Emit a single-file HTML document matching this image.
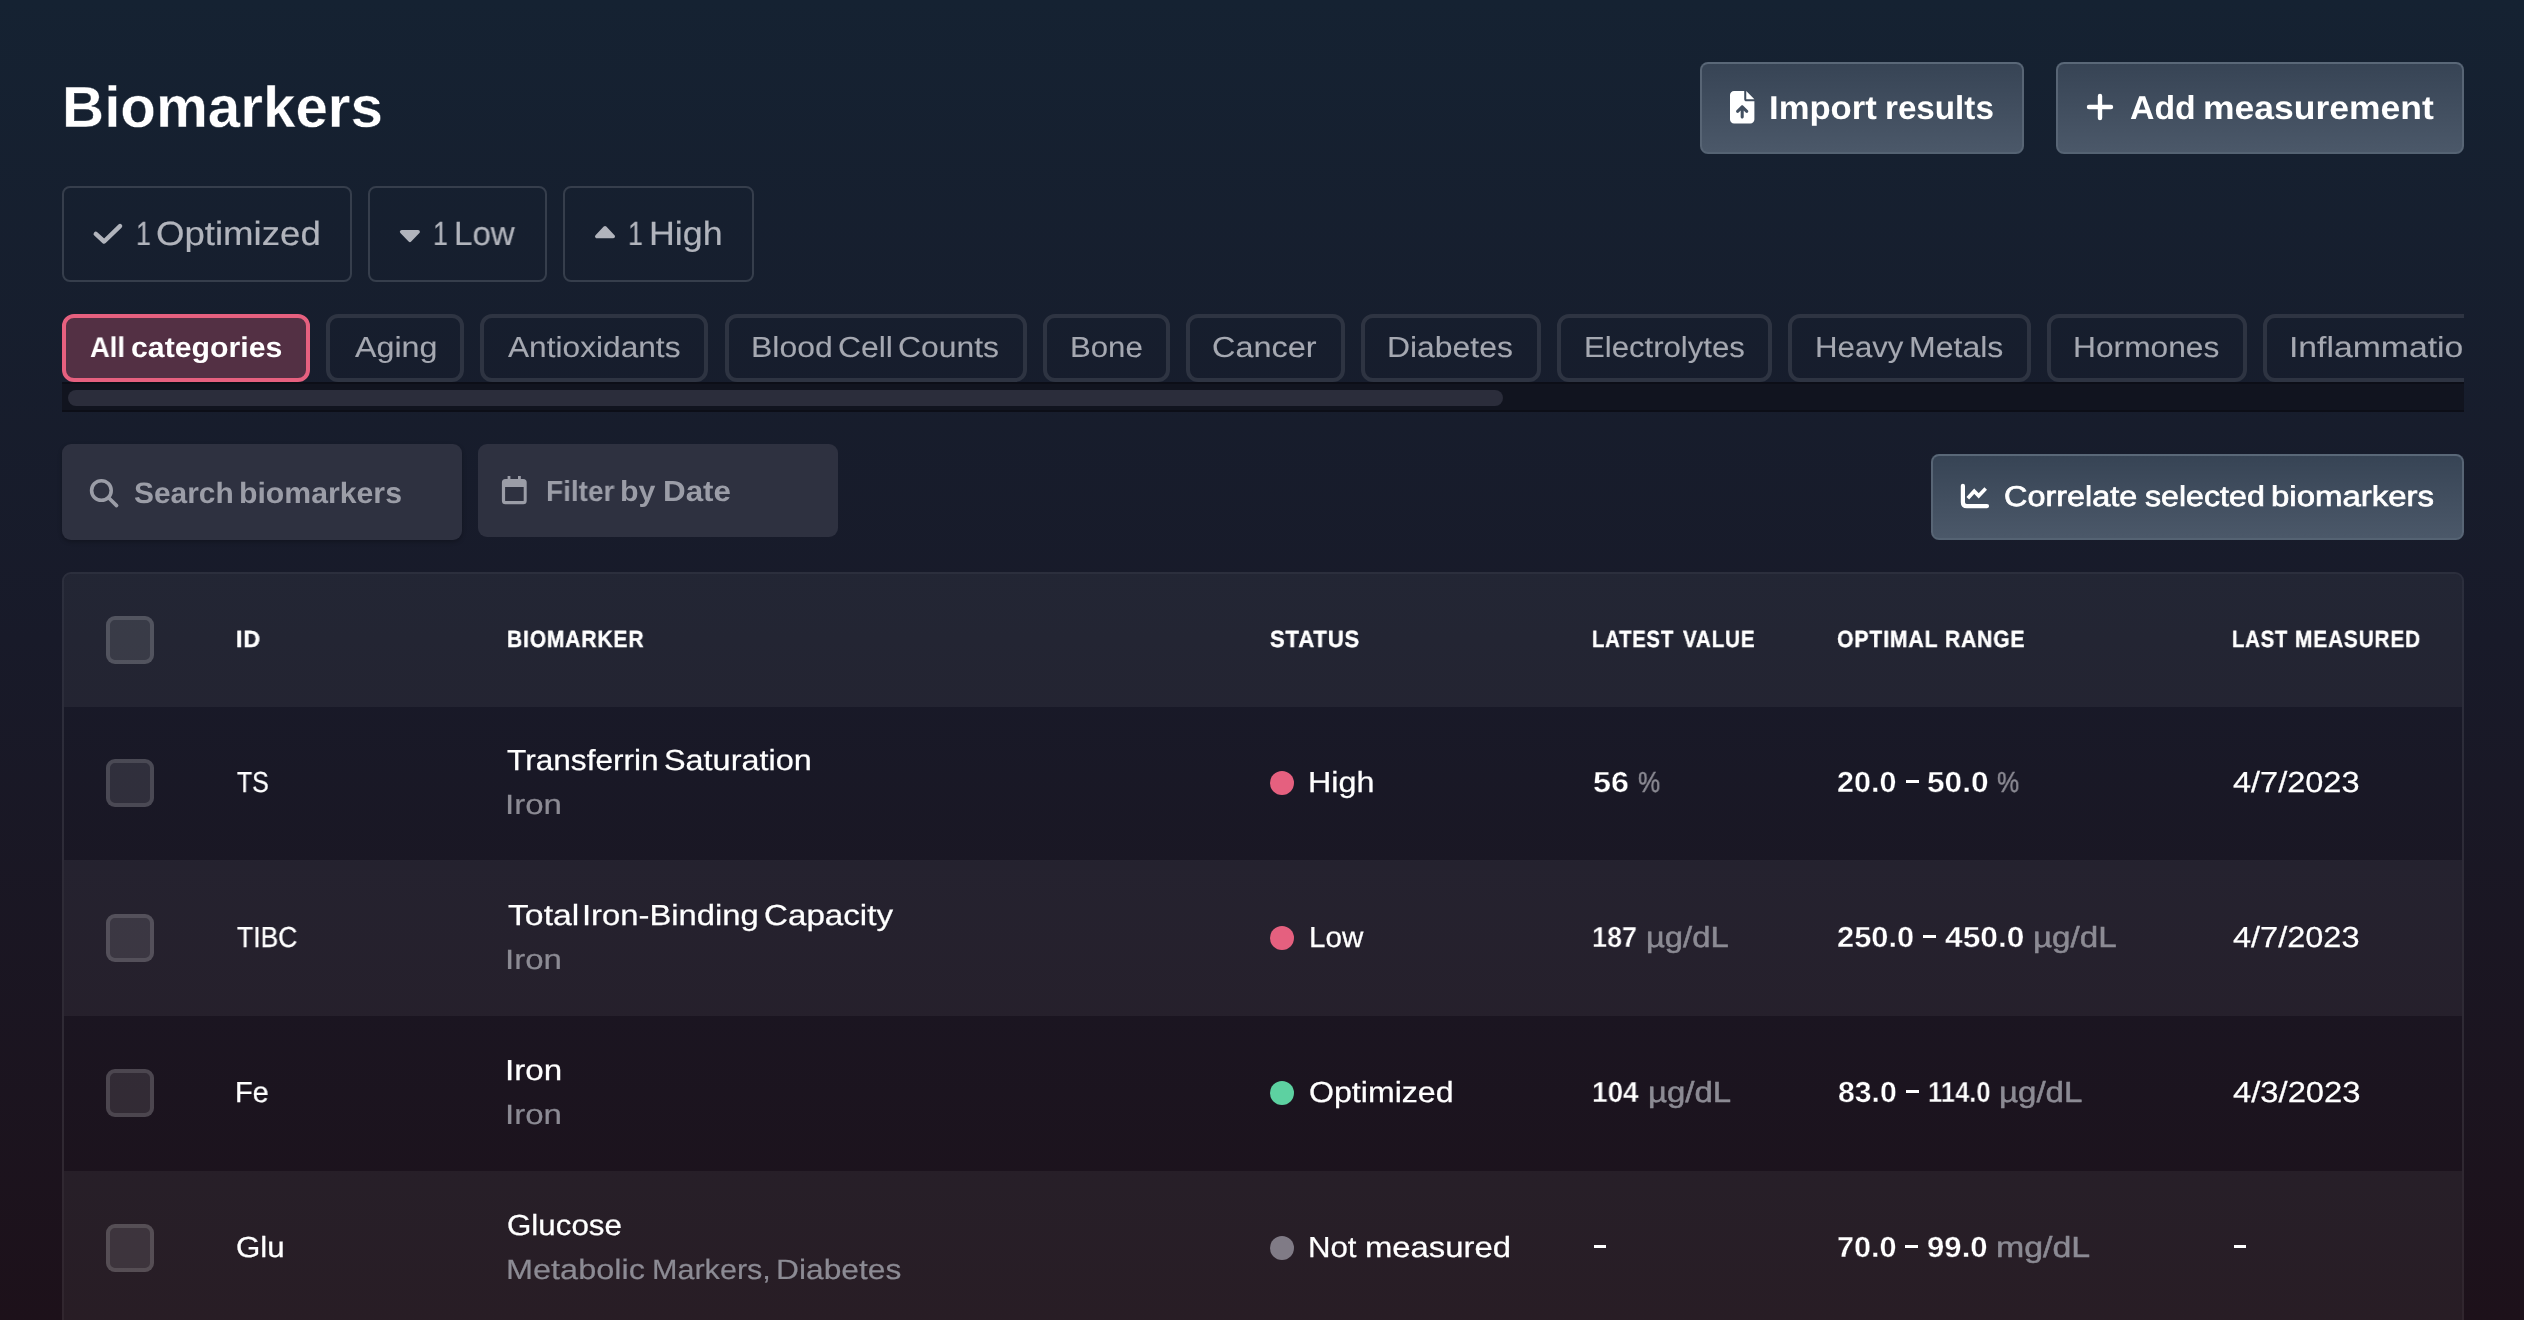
<!DOCTYPE html><html lang="en"><head><meta charset="utf-8"><title>Biomarkers</title><style>
*{box-sizing:border-box;margin:0;padding:0}
html,body{width:2524px;height:1320px;overflow:hidden;background:#181928}
body{font-family:"Liberation Sans",sans-serif;position:relative;
 background:linear-gradient(180deg,#152232 0px,#181a29 640px,#1d111a 1320px);}
.t{position:absolute;white-space:nowrap;line-height:1;transform-origin:0 0;display:block;will-change:transform;-webkit-font-smoothing:antialiased;text-rendering:geometricPrecision}
.abs{position:absolute}
main{position:absolute;left:0;top:0;width:2524px;height:1320px;overflow:hidden;display:block}
.btn{position:absolute;border-radius:8px;border:2px solid #586575;border-top-color:#5a6878;border-bottom-color:#556373;
 background:linear-gradient(180deg,#374455 0%,#4b5869 100%);}
.chip{position:absolute;top:186px;height:96px;border:2px solid #363e4c;border-radius:8px}
.tab{position:absolute;top:314px;height:68px;border:4px solid #2e3442;border-radius:12px}
.tab.on{border-color:#e6607f;background:#533044}
.track{position:absolute;left:62px;top:382px;width:2402px;height:30px;background:#11141f;
 border-top:2px solid #0c0e17;border-bottom:2px solid #0c0e17}
.thumb{position:absolute;left:68px;top:390px;width:1435px;height:16px;border-radius:8px;background:#2b2d3b}
.inp{position:absolute;border-radius:9px;background:#2e3140}
.table{position:absolute;left:62px;top:572px;width:2402px;height:760px;border:2px solid rgba(255,255,255,.09);
 border-radius:9px;overflow:hidden}
.row{position:absolute;left:0;width:100%}
.cb{position:absolute;left:42px;width:48px;height:48px;border-radius:9px;border:4px solid rgba(255,255,255,.13);
 background:rgba(255,255,255,.10)}
.dot{position:absolute;width:24px;height:24px;border-radius:50%}
svg{position:absolute;overflow:visible}
</style></head><body><main>
<h1><span class="t " style="left:61.68px;top:79px;font-size:58px;color:#fff;transform:scaleX(1.0058);font-weight:bold;-webkit-text-stroke:0.4px #162130;">Biomarkers</span></h1>
<div class="btn" style="left:1700px;top:62px;width:324px;height:92px"></div>
<svg style="left:1730px;top:90.6px" width="24.4" height="32.6" viewBox="0 0 384 512"><path fill="#fff" fill-rule="evenodd" d="M64 0C28.7 0 0 28.7 0 64V448c0 35.3 28.7 64 64 64H320c35.300 0 64-28.700 64-64V160H256c-17.700 0-32-14.300-32-32V0H64zM256 0V128H384L256 0zM216 408c0 13.300-10.700 24-24 24s-24-10.700-24-24V305.900l-31 31c-9.400 9.400-24.600 9.400-33.900 0s-9.400-24.600 0-33.900l72-72c9.400-9.400 24.600-9.400 33.900 0l72 72c9.400 9.400 9.400 24.600 0 33.900s-24.600 9.400-33.900 0l-31-31V408z"/></svg>
<span class="t " style="left:1769.09px;top:91px;font-size:33px;color:#fff;transform:scaleX(1.0500);font-weight:bold;">Import</span><span class="t " style="left:1885.49px;top:91px;font-size:33px;color:#fff;transform:scaleX(1.0057);font-weight:bold;">results</span>
<div class="btn" style="left:2056px;top:62px;width:408px;height:92px"></div>
<svg style="left:2085px;top:92px" width="30" height="30" viewBox="0 0 30 30"><path d="M15 4.000V26M4 15H26" stroke="#fff" stroke-width="4.4" stroke-linecap="round" fill="none"/></svg>
<span class="t " style="left:2129.78px;top:91px;font-size:33px;color:#fff;transform:scaleX(1.0229);font-weight:bold;">Add</span><span class="t " style="left:2202.84px;top:91px;font-size:33px;color:#fff;transform:scaleX(1.0754);font-weight:bold;">measurement</span>
<div class="chip" style="left:62px;width:290px"></div>
<svg style="left:90px;top:220px" width="36" height="28" viewBox="90 220 36 28"><path d="M95.800 233.900L104.100 241.500L120 226.100" stroke="#b1b4bc" stroke-width="4.500" stroke-linecap="round" stroke-linejoin="round" fill="none"/></svg>
<span class="t " style="left:135.50px;top:218px;font-size:33.5px;color:#b1b4bc;transform:scaleX(0.8000);-webkit-text-stroke:0.2px #b1b4bc;">1</span><span class="t " style="left:156.26px;top:218px;font-size:33.5px;color:#b1b4bc;transform:scaleX(1.0924);-webkit-text-stroke:0.2px #b1b4bc;">Optimized</span>
<div class="chip" style="left:368px;width:179px"></div>
<svg style="left:398px;top:228px" width="24" height="16" viewBox="398 228 24 16"><path d="M401.700 231.800H418.100L409.900 240.300Z" fill="#b1b4bc" stroke="#b1b4bc" stroke-width="3.6" stroke-linejoin="round"/></svg>
<span class="t " style="left:433.25px;top:218px;font-size:33.5px;color:#b1b4bc;transform:scaleX(0.8000);-webkit-text-stroke:0.2px #b1b4bc;">1</span><span class="t " style="left:454.14px;top:218px;font-size:33.5px;color:#b1b4bc;transform:scaleX(0.9864);-webkit-text-stroke:0.2px #b1b4bc;">Low</span>
<div class="chip" style="left:563px;width:191px"></div>
<svg style="left:593px;top:224px" width="24" height="16" viewBox="593 224 24 16"><path d="M596.800 236.400H613.200L605 227.800Z" fill="#b1b4bc" stroke="#b1b4bc" stroke-width="3.6" stroke-linejoin="round"/></svg>
<span class="t " style="left:628.25px;top:218px;font-size:33.5px;color:#b1b4bc;transform:scaleX(0.8000);-webkit-text-stroke:0.2px #b1b4bc;">1</span><span class="t " style="left:649.11px;top:218px;font-size:33.5px;color:#b1b4bc;transform:scaleX(1.0686);-webkit-text-stroke:0.2px #b1b4bc;">High</span>
<div class="abs" style="left:62px;top:300px;width:2402px;height:90px;overflow:hidden">
<div class="tab on" style="left:0px;top:14px;width:248px"></div>
<div class="tab" style="left:264px;top:14px;width:138px"></div>
<div class="tab" style="left:418px;top:14px;width:228px"></div>
<div class="tab" style="left:663px;top:14px;width:302px"></div>
<div class="tab" style="left:981px;top:14px;width:127px"></div>
<div class="tab" style="left:1124px;top:14px;width:159px"></div>
<div class="tab" style="left:1299px;top:14px;width:180px"></div>
<div class="tab" style="left:1495px;top:14px;width:215px"></div>
<div class="tab" style="left:1726px;top:14px;width:243px"></div>
<div class="tab" style="left:1985px;top:14px;width:200px"></div>
<div class="tab" style="left:2201px;top:14px;width:268px"></div>
</div>
<span class="t " style="left:90.13px;top:334px;font-size:28.5px;color:#fff;transform:scaleX(0.9614);font-weight:bold;">All</span><span class="t " style="left:131.23px;top:334px;font-size:28.5px;color:#fff;transform:scaleX(1.0613);font-weight:bold;">categories</span>
<span class="t " style="left:354.80px;top:334px;font-size:29px;color:#a5a8b1;transform:scaleX(1.1120);-webkit-text-stroke:0.1px #a5a8b1;">Aging</span>
<span class="t " style="left:508.40px;top:334px;font-size:29px;color:#a5a8b1;transform:scaleX(1.0917);-webkit-text-stroke:0.1px #a5a8b1;">Antioxidants</span>
<span class="t " style="left:750.67px;top:334px;font-size:29px;color:#a5a8b1;transform:scaleX(1.1014);-webkit-text-stroke:0.1px #a5a8b1;">Blood</span><span class="t " style="left:837.96px;top:334px;font-size:29px;color:#a5a8b1;transform:scaleX(1.0985);-webkit-text-stroke:0.1px #a5a8b1;">Cell</span><span class="t " style="left:898.16px;top:334px;font-size:29px;color:#a5a8b1;transform:scaleX(1.0994);-webkit-text-stroke:0.1px #a5a8b1;">Counts</span>
<span class="t " style="left:1069.53px;top:334px;font-size:29px;color:#a5a8b1;transform:scaleX(1.0748);-webkit-text-stroke:0.1px #a5a8b1;">Bone</span>
<span class="t " style="left:1212.43px;top:334px;font-size:29px;color:#a5a8b1;transform:scaleX(1.1190);-webkit-text-stroke:0.1px #a5a8b1;">Cancer</span>
<span class="t " style="left:1387.47px;top:334px;font-size:29px;color:#a5a8b1;transform:scaleX(1.0998);-webkit-text-stroke:0.1px #a5a8b1;">Diabetes</span>
<span class="t " style="left:1583.53px;top:334px;font-size:29px;color:#a5a8b1;transform:scaleX(1.0730);-webkit-text-stroke:0.1px #a5a8b1;">Electrolytes</span>
<span class="t " style="left:1814.52px;top:334px;font-size:29px;color:#a5a8b1;transform:scaleX(1.0763);-webkit-text-stroke:0.1px #a5a8b1;">Heavy</span><span class="t " style="left:1908.76px;top:334px;font-size:29px;color:#a5a8b1;transform:scaleX(1.1048);-webkit-text-stroke:0.1px #a5a8b1;">Metals</span>
<span class="t " style="left:2072.98px;top:334px;font-size:29px;color:#a5a8b1;transform:scaleX(1.0943);-webkit-text-stroke:0.1px #a5a8b1;">Hormones</span>
<div class="abs" style="left:2263px;top:314px;width:201px;height:68px;overflow:hidden"><span class="t " style="left:25.88px;top:20px;font-size:29px;color:#a5a8b1;transform:scaleX(1.1628);-webkit-text-stroke:0.1px #a5a8b1;">Inflammation</span></div>
<div class="track"></div><div class="thumb"></div>
<div class="inp" style="left:62px;top:444px;width:400px;height:96px;box-shadow:0 2px 4px rgba(0,0,0,.25)"></div>
<svg style="left:88px;top:476px" width="34" height="34" viewBox="88 476 34 34"><circle cx="101.400" cy="490.500" r="9.800" stroke="#9b9da7" stroke-width="3.600" fill="none"/><path d="M108.600 497.700L116.600 505.600" stroke="#9b9da7" stroke-width="3.600" stroke-linecap="round"/></svg>
<span class="t " style="left:134.09px;top:479px;font-size:29.5px;color:#9b9da7;transform:scaleX(1.0136);font-weight:bold;">Search</span><span class="t " style="left:239.35px;top:479px;font-size:29.5px;color:#9b9da7;transform:scaleX(1.0244);font-weight:bold;">biomarkers</span>
<div class="inp" style="left:478px;top:444px;width:360px;height:93px"></div>
<svg style="left:500px;top:474px" width="30" height="32" viewBox="500 474 30 32"><path fill="#9b9da7" fill-rule="evenodd" d="M507.600 475.900h2.800v3.200h7.600v-3.200h2.800v3.200h2.400q3.500 0 3.500 3.500v18.100q0 3.500 -3.500 3.500h-17.800q-3.500 0 -3.500 -3.500v-18.100q0 -3.500 3.500 -3.500h2.200zM505.100 486.900v13.500q0 .6 .6 .6h17.400q.6 0 .6 -.6v-13.500z"/></svg>
<span class="t " style="left:545.97px;top:478px;font-size:29px;color:#9b9da7;transform:scaleX(0.9650);font-weight:bold;">Filter</span><span class="t " style="left:619.71px;top:478px;font-size:29px;color:#9b9da7;transform:scaleX(1.0472);font-weight:bold;">by</span><span class="t " style="left:662.64px;top:478px;font-size:29px;color:#9b9da7;transform:scaleX(1.0817);font-weight:bold;">Date</span>
<div class="btn" style="left:1931px;top:454px;width:533px;height:86px"></div>
<svg style="left:1958px;top:482px" width="34" height="30" viewBox="1958 482 34 30"><path d="M1962.900 485.800V502.200Q1962.900 506.100 1966.800 506.100H1987" stroke="#fff" stroke-width="4.200" stroke-linecap="round" fill="none"/><path d="M1967.800 498.300L1974.200 491.200L1978.700 495.800L1985.700 488.600" stroke="#fff" stroke-width="3.600" fill="none" stroke-linejoin="miter"/></svg>
<span class="t " style="left:2004.41px;top:483px;font-size:28.5px;color:#fff;transform:scaleX(1.1361);-webkit-text-stroke:0.7px #fff;">Correlate</span><span class="t " style="left:2145.01px;top:483px;font-size:28.5px;color:#fff;transform:scaleX(1.1283);-webkit-text-stroke:0.7px #fff;">selected</span><span class="t " style="left:2271.32px;top:483px;font-size:28.5px;color:#fff;transform:scaleX(1.1563);-webkit-text-stroke:0.7px #fff;">biomarkers</span>
<div class="table">
<div class="row" style="top:0;height:133px;background:rgba(255,255,255,.05)">
<div class="cb" style="top:42px"></div>
<span class="t " style="left:172.22px;top:54px;font-size:23.5px;color:#fff;transform:scaleX(0.9845);font-weight:bold;letter-spacing:0.04em;-webkit-text-stroke:0.4px #fff;">ID</span>
<span class="t " style="left:442.56px;top:54px;font-size:23.5px;color:#fff;transform:scaleX(0.8955);font-weight:bold;letter-spacing:0.04em;-webkit-text-stroke:0.4px #fff;">BIOMARKER</span>
<span class="t " style="left:1206.04px;top:54px;font-size:23.5px;color:#fff;transform:scaleX(0.9370);font-weight:bold;letter-spacing:0.04em;-webkit-text-stroke:0.4px #fff;">STATUS</span>
<span class="t " style="left:1528.01px;top:54px;font-size:23.5px;color:#fff;transform:scaleX(0.8608);font-weight:bold;letter-spacing:0.04em;-webkit-text-stroke:0.4px #fff;">LATEST</span>
<span class="t " style="left:1618.51px;top:54px;font-size:23.5px;color:#fff;transform:scaleX(0.8765);font-weight:bold;letter-spacing:0.04em;-webkit-text-stroke:0.4px #fff;">VALUE</span>
<span class="t " style="left:1773.19px;top:54px;font-size:23.5px;color:#fff;transform:scaleX(0.9031);font-weight:bold;letter-spacing:0.04em;-webkit-text-stroke:0.4px #fff;">OPTIMAL</span>
<span class="t " style="left:1881.36px;top:54px;font-size:23.5px;color:#fff;transform:scaleX(0.8961);font-weight:bold;letter-spacing:0.04em;-webkit-text-stroke:0.4px #fff;">RANGE</span>
<span class="t " style="left:2168.40px;top:54px;font-size:23.5px;color:#fff;transform:scaleX(0.8637);font-weight:bold;letter-spacing:0.04em;-webkit-text-stroke:0.4px #fff;">LAST</span>
<span class="t " style="left:2230.97px;top:54px;font-size:23.5px;color:#fff;transform:scaleX(0.8876);font-weight:bold;letter-spacing:0.04em;-webkit-text-stroke:0.4px #fff;">MEASURED</span>
</div>
<div class="row" style="top:133px;height:153px;background:transparent">
<div class="cb" style="top:52px"></div>
<span class="t " style="left:172.89px;top:62px;font-size:29px;color:#fff;transform:scaleX(0.8551);-webkit-text-stroke:0.25px #fff;">TS</span>
<span class="t " style="left:443.15px;top:40px;font-size:29px;color:#fff;transform:scaleX(1.0900);-webkit-text-stroke:0.25px #fff;">Transferrin</span><span class="t " style="left:599.85px;top:40px;font-size:29px;color:#fff;transform:scaleX(1.1170);-webkit-text-stroke:0.25px #fff;">Saturation</span>
<span class="t " style="left:440.85px;top:84px;font-size:28px;color:#8c8b94;transform:scaleX(1.1818);-webkit-text-stroke:0.2px #8c8b94;">Iron</span>
<div class="dot" style="left:1206px;top:64.00000000000004px;background:#e5607f"></div>
<span class="t " style="left:1244.34px;top:62px;font-size:29px;color:#fff;transform:scaleX(1.1135);-webkit-text-stroke:0.25px #fff;">High</span>
<span class="t " style="left:1528.81px;top:62px;font-size:29px;color:#fff;transform:scaleX(1.1151);font-weight:bold;-webkit-text-stroke:0.35px #191826;">56</span>
<span class="t " style="left:1573.94px;top:62px;font-size:29px;color:#8c8b94;transform:scaleX(0.8571);-webkit-text-stroke:0.5px #8c8b94;">%</span>
<span class="t " style="left:1773.15px;top:62px;font-size:29px;color:#fff;transform:scaleX(1.0516);font-weight:bold;-webkit-text-stroke:0.35px #191826;">20.0</span>
<div class="abs" style="left:1841.5px;top:72.7px;width:13.3px;height:3.6px;background:#fff"></div>
<span class="t " style="left:1863.13px;top:62px;font-size:29px;color:#fff;transform:scaleX(1.0917);font-weight:bold;-webkit-text-stroke:0.35px #191826;">50.0</span>
<span class="t " style="left:1933.34px;top:62px;font-size:29px;color:#8c8b94;transform:scaleX(0.8571);-webkit-text-stroke:0.5px #8c8b94;">%</span>
<span class="t " style="left:2168.83px;top:62px;font-size:29px;color:#fff;transform:scaleX(1.1206);-webkit-text-stroke:0.25px #fff;">4/7/2023</span>
</div>
<div class="row" style="top:286px;height:156px;background:rgba(255,255,255,.05)">
<div class="cb" style="top:54px"></div>
<span class="t " style="left:172.85px;top:64px;font-size:29px;color:#fff;transform:scaleX(0.9146);-webkit-text-stroke:0.25px #fff;">TIBC</span>
<span class="t " style="left:443.50px;top:42px;font-size:29px;color:#fff;transform:scaleX(1.1633);-webkit-text-stroke:0.25px #fff;">Total</span><span class="t " style="left:517.96px;top:42px;font-size:29px;color:#fff;transform:scaleX(1.1303);-webkit-text-stroke:0.25px #fff;">Iron-Binding</span><span class="t " style="left:700.00px;top:42px;font-size:29px;color:#fff;transform:scaleX(1.1436);-webkit-text-stroke:0.25px #fff;">Capacity</span>
<span class="t " style="left:440.85px;top:86px;font-size:28px;color:#8c8b94;transform:scaleX(1.1818);-webkit-text-stroke:0.2px #8c8b94;">Iron</span>
<div class="dot" style="left:1206px;top:66.00000000000004px;background:#e5607f"></div>
<span class="t " style="left:1244.55px;top:64px;font-size:29px;color:#fff;transform:scaleX(1.0196);-webkit-text-stroke:0.25px #fff;">Low</span>
<span class="t " style="left:1528.03px;top:64px;font-size:29px;color:#fff;transform:scaleX(0.9273);font-weight:bold;-webkit-text-stroke:0.35px #25212e;">187</span>
<span class="t " style="left:1581.55px;top:64px;font-size:29px;color:#8c8b94;transform:scaleX(1.1294);-webkit-text-stroke:0.5px #8c8b94;">µg/dL</span>
<span class="t " style="left:1773.14px;top:64px;font-size:29px;color:#fff;transform:scaleX(1.0639);font-weight:bold;-webkit-text-stroke:0.35px #25212e;">250.0</span>
<div class="abs" style="left:1859.2px;top:74.7px;width:13.3px;height:3.6px;background:#fff"></div>
<span class="t " style="left:1881.36px;top:64px;font-size:29px;color:#fff;transform:scaleX(1.0930);font-weight:bold;-webkit-text-stroke:0.35px #25212e;">450.0</span>
<span class="t " style="left:1968.63px;top:64px;font-size:29px;color:#8c8b94;transform:scaleX(1.1437);-webkit-text-stroke:0.5px #8c8b94;">µg/dL</span>
<span class="t " style="left:2168.83px;top:64px;font-size:29px;color:#fff;transform:scaleX(1.1206);-webkit-text-stroke:0.25px #fff;">4/7/2023</span>
</div>
<div class="row" style="top:442px;height:155px;background:transparent">
<div class="cb" style="top:53px"></div>
<span class="t " style="left:171.12px;top:63px;font-size:29px;color:#fff;transform:scaleX(0.9934);-webkit-text-stroke:0.25px #fff;">Fe</span>
<span class="t " style="left:440.83px;top:41px;font-size:29px;color:#fff;transform:scaleX(1.1429);-webkit-text-stroke:0.25px #fff;">Iron</span>
<span class="t " style="left:440.85px;top:85px;font-size:28px;color:#8c8b94;transform:scaleX(1.1818);-webkit-text-stroke:0.2px #8c8b94;">Iron</span>
<div class="dot" style="left:1206px;top:65.00000000000004px;background:#5dd1a1"></div>
<span class="t " style="left:1245.46px;top:63px;font-size:29px;color:#fff;transform:scaleX(1.1075);-webkit-text-stroke:0.25px #fff;">Optimized</span>
<span class="t " style="left:1527.97px;top:63px;font-size:29px;color:#fff;transform:scaleX(0.9613);font-weight:bold;-webkit-text-stroke:0.35px #1b141f;">104</span>
<span class="t " style="left:1583.74px;top:63px;font-size:29px;color:#8c8b94;transform:scaleX(1.1366);-webkit-text-stroke:0.5px #8c8b94;">µg/dL</span>
<span class="t " style="left:1773.66px;top:63px;font-size:29px;color:#fff;transform:scaleX(1.0423);font-weight:bold;-webkit-text-stroke:0.35px #1b141f;">83.0</span>
<div class="abs" style="left:1841.5px;top:73.7px;width:13.3px;height:3.6px;background:#fff"></div>
<span class="t " style="left:1863.61px;top:63px;font-size:29px;color:#fff;transform:scaleX(0.8824);font-weight:bold;-webkit-text-stroke:0.35px #1b141f;">114.0</span>
<span class="t " style="left:1934.74px;top:63px;font-size:29px;color:#8c8b94;transform:scaleX(1.1394);-webkit-text-stroke:0.5px #8c8b94;">µg/dL</span>
<span class="t " style="left:2168.82px;top:63px;font-size:29px;color:#fff;transform:scaleX(1.1296);-webkit-text-stroke:0.25px #fff;">4/3/2023</span>
</div>
<div class="row" style="top:597px;height:155px;background:rgba(255,255,255,.05)">
<div class="cb" style="top:53px"></div>
<span class="t " style="left:171.89px;top:63px;font-size:29px;color:#fff;transform:scaleX(1.0789);-webkit-text-stroke:0.25px #fff;">Glu</span>
<span class="t " style="left:442.79px;top:41px;font-size:29px;color:#fff;transform:scaleX(1.0800);-webkit-text-stroke:0.25px #fff;">Glucose</span>
<span class="t " style="left:442.25px;top:85px;font-size:28px;color:#8c8b94;transform:scaleX(1.1591);-webkit-text-stroke:0.2px #8c8b94;">Metabolic</span><span class="t " style="left:588.30px;top:85px;font-size:28px;color:#8c8b94;transform:scaleX(1.0912);-webkit-text-stroke:0.2px #8c8b94;">Markers,</span><span class="t " style="left:711.50px;top:85px;font-size:28px;color:#8c8b94;transform:scaleX(1.1342);-webkit-text-stroke:0.2px #8c8b94;">Diabetes</span>
<div class="dot" style="left:1206px;top:65.00000000000004px;background:#807b86"></div>
<span class="t " style="left:1244.43px;top:63px;font-size:29px;color:#fff;transform:scaleX(1.0749);-webkit-text-stroke:0.25px #fff;">Not</span><span class="t " style="left:1300.55px;top:63px;font-size:29px;color:#fff;transform:scaleX(1.1318);-webkit-text-stroke:0.25px #fff;">measured</span>
<div class="abs" style="left:1529.9px;top:73.7px;width:12.2px;height:3.6px;background:#fff"></div>
<span class="t " style="left:1772.83px;top:63px;font-size:29px;color:#fff;transform:scaleX(1.0573);font-weight:bold;-webkit-text-stroke:0.35px #271e26;">70.0</span>
<div class="abs" style="left:1841.4px;top:73.7px;width:12.9px;height:3.6px;background:#fff"></div>
<span class="t " style="left:1862.93px;top:63px;font-size:29px;color:#fff;transform:scaleX(1.0737);font-weight:bold;-webkit-text-stroke:0.35px #271e26;">99.0</span>
<span class="t " style="left:1931.98px;top:63px;font-size:29px;color:#8c8b94;transform:scaleX(1.1684);-webkit-text-stroke:0.5px #8c8b94;">mg/dL</span>
<div class="abs" style="left:2170.2px;top:74.0px;width:12.3px;height:2.9px;background:#fff"></div>
</div>
</div>
</main>
<script>(function(){var d=window.devicePixelRatio||1,w=window.innerWidth||2524;if(d>1.2&&Math.abs(w*d-2524)<40){document.documentElement.style.zoom=1/d;}})();</script>
</body></html>
